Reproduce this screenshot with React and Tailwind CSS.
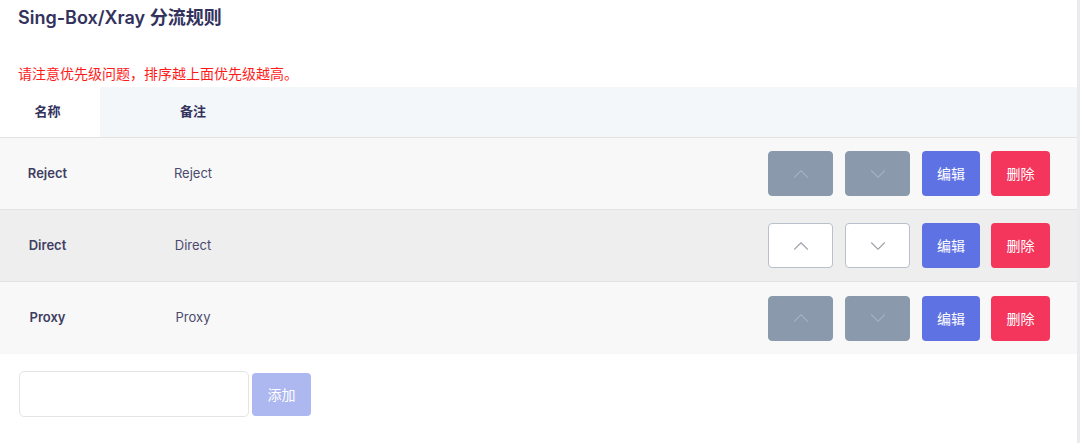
import { ChevronUp, ChevronDown } from "lucide-react";

const rules = [
  { name: "Reject", note: "Reject" },
  { name: "Direct", note: "Direct" },
  { name: "Proxy", note: "Proxy" },
];

const MoveButton = ({ disabled, children }) => (
  <button
    className={
      disabled
        ? "w-[65px] h-[45px] rounded-[4px] bg-[#8a99ab] border border-[#8a99ab] flex items-center justify-center text-[#a5b0bd]"
        : "w-[65px] h-[45px] rounded-[4px] bg-white border border-[#b9c0cb] flex items-center justify-center text-[#a0a4ab]"
    }
  >
    {children}
  </button>
);

export default function App() {
  return (
    <div
      className="w-[1080px] h-[443px] bg-white flex"
      style={{ fontFamily: 'Inter, "Noto Sans CJK SC", sans-serif' }}
    >
      <div className="w-[1077px]">
        {/* Title */}
        <h1 className="pl-[18px] pt-[6px] h-[60px] text-[18px] font-semibold text-[#32325d] leading-[24px]">
          Sing-Box/Xray 分流规则
        </h1>

        <p className="pl-[18px] h-[27px] text-[14px] text-[#ff1a1a] leading-[18px] pt-[5px]">
          请注意优先级问题，排序越上面优先级越高。
        </p>

        {/* Table header */}
        <div className="flex h-[51px] border-b border-[#e3e3e3] text-[13px] font-semibold text-[#32325d]">
          <div className="w-[100px] bg-white flex items-center justify-center pr-[5px]">名称</div>
          <div className="flex-1 bg-[#f4f7fa] flex items-center">
            <div className="w-[186px] text-center">备注</div>
          </div>
        </div>

        {/* Rows */}
        {rules.map((r, i) => (
          <div
            key={r.name}
            className={
              (i === 1 ? "bg-[#eeeeee]" : "bg-[#f8f8f8]") +
              " flex items-center h-[72px] text-[13px] text-[#3e3e62]" +
              (i < rules.length - 1 ? " border-b border-[#e3e3e3]" : "")
            }
          >
            <div className="w-[95px] text-center font-semibold">{r.name}</div>
            <div className="w-[196px] text-center text-[#4a4a6e]">{r.note}</div>
            <div className="flex-1 flex justify-end items-center gap-[12px] pr-[27px]">
              <MoveButton disabled={i !== 1}>
                <ChevronUp size={26} strokeWidth={1} />
              </MoveButton>
              <MoveButton disabled={i !== 1}>
                <ChevronDown size={26} strokeWidth={1} />
              </MoveButton>
              <button className="w-[58px] h-[45px] rounded-[4px] bg-[#5f72e3] text-white text-[14px]">
                编辑
              </button>
              <button className="w-[59px] h-[45px] rounded-[4px] bg-[#f5365c] text-white text-[14px] -ml-[1px]">
                删除
              </button>
            </div>
          </div>
        ))}

        {/* Add rule */}
        <div className="flex items-center pl-[19px] pt-[17px] gap-[3px]">
          <input
            type="text"
            className="w-[230px] h-[46px] border border-[#e4e4e4] rounded-[5px] bg-white outline-none"
          />
          <button className="w-[59px] h-[43px] rounded-[4px] bg-[#aeb8f0] text-white text-[14px]">
            添加
          </button>
        </div>
      </div>
      <div className="w-[3px] bg-[#e9ebef]" />
    </div>
  );
}
